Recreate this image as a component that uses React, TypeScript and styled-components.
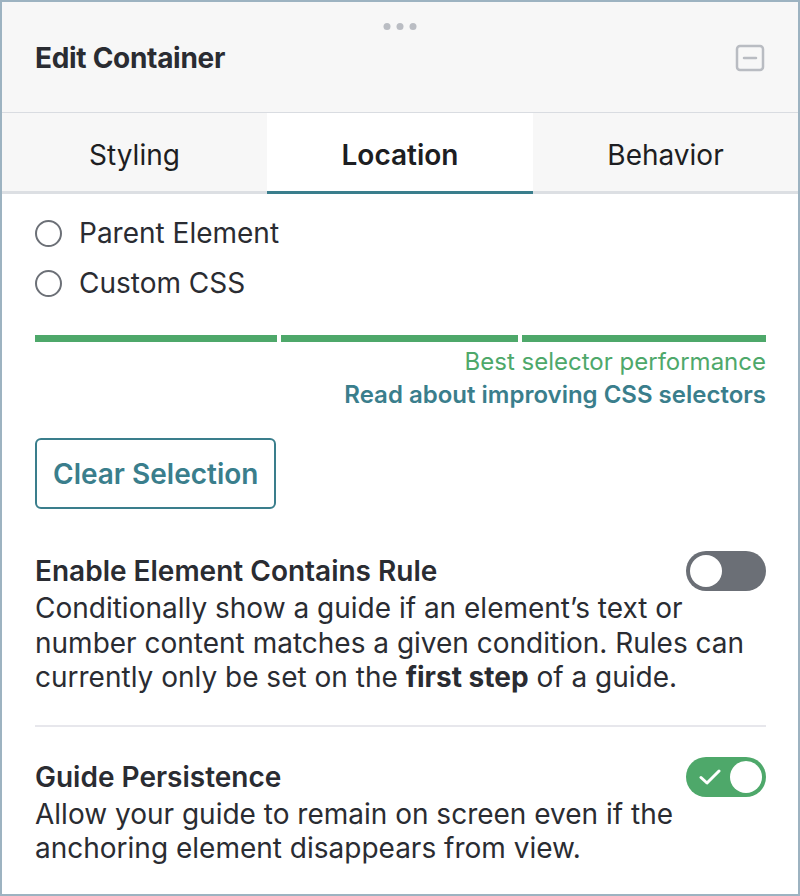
import React from "react";
import styled, { createGlobalStyle } from "styled-components";

const GlobalStyle = createGlobalStyle`
  html, body {
    margin: 0;
    padding: 0;
    background: #ffffff;
  }
  * {
    box-sizing: border-box;
  }
`;

// Colours
const TEAL = "#3a7e8c";
const GREEN = "#4ea86a";
const TEXT = "#2a2c32";

const Panel = styled.div`
  width: 800px;
  height: 896px;
  border: 2px solid #9db3c1;
  background: #ffffff;
  font-family: Inter, "Noto Sans", sans-serif;
  color: ${TEXT};
  overflow: hidden;
`;

const Header = styled.header`
  position: relative;
  height: 111px;
  background: #f7f7f7;
  border-bottom: 1px solid #d9dce1;
  display: flex;
  align-items: center;
  justify-content: space-between;
  padding: 1px 33px 0 33px;
`;

const DragHandle = styled.div`
  position: absolute;
  top: 21px;
  left: 50%;
  transform: translateX(-50%);
  display: flex;
  gap: 6px;
`;

const Dot = styled.span`
  width: 7px;
  height: 7px;
  border-radius: 50%;
  background: #babdc3;
`;

const Title = styled.h1`
  margin: 0;
  font-size: 28px;
  font-weight: 700;
  color: ${TEXT};
  letter-spacing: -0.3px;
`;

const IconButton = styled.button`
  border: none;
  background: none;
  padding: 0;
  width: 30px;
  height: 28px;
  display: flex;
  align-items: center;
  justify-content: center;
  cursor: pointer;
`;

const Tabs = styled.nav`
  display: grid;
  grid-template-columns: 265px 266px 1fr;
  height: 81px;
`;

const Tab = styled.button<{ $active?: boolean }>`
  border: none;
  border-bottom: 3px solid ${(p) => (p.$active ? TEAL : "#dcdfe3")};
  background: ${(p) => (p.$active ? "#ffffff" : "#f7f7f7")};
  font-family: Inter, "Noto Sans", sans-serif;
  font-size: 28px;
  font-weight: ${(p) => (p.$active ? 600 : 400)};
  color: #1d1e22;
  padding: 5px 0 0;
  cursor: pointer;
`;

const Content = styled.div`
  padding: 14px 32px 0 33px;
`;

const RadioRow = styled.label`
  display: flex;
  align-items: center;
  height: 50px;
  gap: 17px;
  font-size: 28px;
`;

const RadioCircle = styled.span`
  width: 27px;
  height: 27px;
  border-radius: 50%;
  border: 2px solid #6c7077;
  flex-shrink: 0;
`;

const StrengthBar = styled.div`
  margin-top: 27px;
  display: grid;
  grid-template-columns: 242px 237px 1fr;
  gap: 4px;
`;

const Segment = styled.div`
  height: 7px;
  background: ${GREEN};
`;

const Note = styled.div<{ $bold?: boolean; $color: string }>`
  text-align: right;
  font-size: 24px;
  line-height: 33px;
  font-weight: ${(p) => (p.$bold ? 600 : 400)};
  color: ${(p) => p.$color};
`;

const Notes = styled.div`
  margin-top: 3px;
`;

const OutlineButton = styled.button`
  margin-top: 27px;
  height: 71px;
  padding: 0 16px;
  border: 2px solid ${TEAL};
  border-radius: 6px;
  background: #ffffff;
  color: ${TEAL};
  font-family: Inter, "Noto Sans", sans-serif;
  font-size: 28px;
  font-weight: 600;
  cursor: pointer;
`;

const Setting = styled.section<{ $top: number }>`
  margin-top: ${(p) => p.$top}px;
`;

const SettingRow = styled.div`
  display: flex;
  align-items: center;
  justify-content: space-between;
  height: 40px;
`;

const SettingTitle = styled.h2`
  margin: 0;
  font-size: 28px;
  font-weight: 600;
  color: ${TEXT};
`;

const SettingText = styled.p`
  margin: 0;
  font-size: 28px;
  line-height: 34.5px;
  color: ${TEXT};

  b {
    font-weight: 700;
  }
`;

const Divider = styled.hr`
  margin: 30px 0 0;
  border: none;
  border-top: 2px solid #e7e7ec;
`;

const Toggle = styled.span<{ $on?: boolean }>`
  position: relative;
  width: 80px;
  height: 40px;
  border-radius: 20px;
  background: ${(p) => (p.$on ? GREEN : "#6b6f76")};
  flex-shrink: 0;
`;

const Knob = styled.span<{ $on?: boolean }>`
  position: absolute;
  top: 4px;
  left: ${(p) => (p.$on ? "44px" : "4px")};
  width: 32px;
  height: 32px;
  border-radius: 50%;
  background: #ffffff;
`;

const Check = styled.svg`
  position: absolute;
  left: 13px;
  top: 12px;
`;

const Switch: React.FC<{ on?: boolean }> = ({ on }) => (
  <Toggle $on={on}>
    {on && (
      <Check width="22" height="16" viewBox="0 0 22 16">
        <path
          d="M2 8.5 L8 14 L20 2"
          fill="none"
          stroke="#ffffff"
          strokeWidth="3"
          strokeLinecap="round"
          strokeLinejoin="round"
        />
      </Check>
    )}
    <Knob $on={on} />
  </Toggle>
);

const App: React.FC = () => {
  return (
    <>
      <GlobalStyle />
      <Panel>
        <Header>
          <DragHandle>
            <Dot />
            <Dot />
            <Dot />
          </DragHandle>
          <Title>Edit Container</Title>
          <IconButton aria-label="Minimize">
            <svg width="30" height="28" viewBox="0 0 30 28">
              <rect
                x="2"
                y="2"
                width="26"
                height="24"
                rx="3"
                fill="none"
                stroke="#b9bcc2"
                strokeWidth="2.5"
              />
              <line
                x1="9"
                y1="14"
                x2="21"
                y2="14"
                stroke="#b9bcc2"
                strokeWidth="2.5"
                strokeLinecap="round"
              />
            </svg>
          </IconButton>
        </Header>
        <Tabs>
          <Tab>Styling</Tab>
          <Tab $active>Location</Tab>
          <Tab>Behavior</Tab>
        </Tabs>
        <Content>
          <RadioRow>
            <RadioCircle />
            Parent Element
          </RadioRow>
          <RadioRow>
            <RadioCircle />
            Custom CSS
          </RadioRow>

          <StrengthBar>
            <Segment />
            <Segment />
            <Segment />
          </StrengthBar>
          <Notes>
            <Note $color={GREEN}>Best selector performance</Note>
            <Note $bold $color={TEAL}>
              Read about improving CSS selectors
            </Note>
          </Notes>

          <OutlineButton>Clear Selection</OutlineButton>

          <Setting $top={42}>
            <SettingRow>
              <SettingTitle>Enable Element Contains Rule</SettingTitle>
              <Switch />
            </SettingRow>
            <SettingText>
              Conditionally show a guide if an element’s text or number content
              matches a given condition. Rules can currently only be set on the{" "}
              <b>first step</b> of a guide.
            </SettingText>
          </Setting>

          <Divider />

          <Setting $top={30}>
            <SettingRow>
              <SettingTitle>Guide Persistence</SettingTitle>
              <Switch on />
            </SettingRow>
            <SettingText>
              Allow your guide to remain on screen even if the anchoring element
              disappears from view.
            </SettingText>
          </Setting>
        </Content>
      </Panel>
    </>
  );
};

export default App;
